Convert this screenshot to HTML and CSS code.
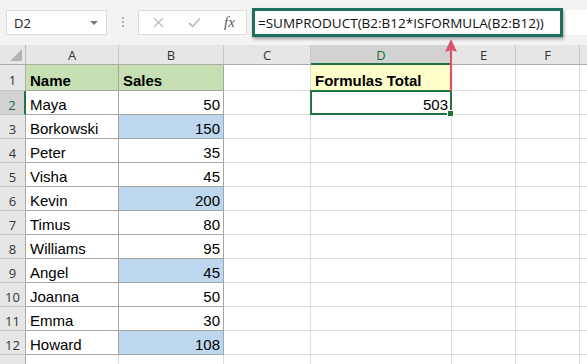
FILE: index.html
```html
<!DOCTYPE html>
<html lang="en">

<head>
    <meta charset="UTF-8">
    <title>SUMPRODUCT ISFORMULA</title>
    <link rel="stylesheet" href="styles.css">
</head>

<body>
    <div class="app">
        <div class="toolbar">
            <div class="name-box">
                <span>D2</span>
                <span class="drop"></span>
            </div>
            <div class="grip">
                <i></i><i></i><i></i>
            </div>
            <div class="fx-buttons">
                <svg class="btn-x" width="11" height="11" viewBox="0 0 11 11">
                    <path d="M1 1 L10 10 M10 1 L1 10" stroke="#bdbdbd" stroke-width="1.3" fill="none"/>
                </svg>
                <svg class="btn-ok" width="13" height="11" viewBox="0 0 13 11">
                    <path d="M1 6 L4.5 9.5 L12 1.5" stroke="#bdbdbd" stroke-width="1.8" fill="none"/>
                </svg>
                <span class="btn-fx">fx</span>
            </div>
            <div class="formula">
                <div class="formula-text">=SUMPRODUCT(B2:B12*ISFORMULA(B2:B12))</div>
            </div>
        </div>

        <div class="sheet">
            <!-- column headers -->
            <div class="corner"><span class="tri"></span></div>
            <div class="col-head">A</div>
            <div class="col-head">B</div>
            <div class="col-head">C</div>
            <div class="col-head selected">D</div>
            <div class="col-head">E</div>
            <div class="col-head">F</div>
            <div class="col-head last"></div>

            <div class="row-head">1</div>
            <div class="cell tbl head">Name</div>
            <div class="cell tbl head">Sales</div>
            <div class="cell"></div>
            <div class="cell label">Formulas Total</div>
            <div class="cell"></div>
            <div class="cell"></div>
            <div class="cell"></div>

            <div class="row-head selected">2</div>
            <div class="cell tbl">Maya</div>
            <div class="cell tbl num">50</div>
            <div class="cell"></div>
            <div class="cell num active">503<span class="handle"></span></div>
            <div class="cell"></div>
            <div class="cell"></div>
            <div class="cell"></div>

            <div class="row-head">3</div>
            <div class="cell tbl">Borkowski</div>
            <div class="cell tbl num blue">150</div>
            <div class="cell"></div>
            <div class="cell"></div>
            <div class="cell"></div>
            <div class="cell"></div>
            <div class="cell"></div>

            <div class="row-head">4</div>
            <div class="cell tbl">Peter</div>
            <div class="cell tbl num">35</div>
            <div class="cell"></div>
            <div class="cell"></div>
            <div class="cell"></div>
            <div class="cell"></div>
            <div class="cell"></div>

            <div class="row-head">5</div>
            <div class="cell tbl">Visha</div>
            <div class="cell tbl num">45</div>
            <div class="cell"></div>
            <div class="cell"></div>
            <div class="cell"></div>
            <div class="cell"></div>
            <div class="cell"></div>

            <div class="row-head">6</div>
            <div class="cell tbl">Kevin</div>
            <div class="cell tbl num blue">200</div>
            <div class="cell"></div>
            <div class="cell"></div>
            <div class="cell"></div>
            <div class="cell"></div>
            <div class="cell"></div>

            <div class="row-head">7</div>
            <div class="cell tbl">Timus</div>
            <div class="cell tbl num">80</div>
            <div class="cell"></div>
            <div class="cell"></div>
            <div class="cell"></div>
            <div class="cell"></div>
            <div class="cell"></div>

            <div class="row-head">8</div>
            <div class="cell tbl">Williams</div>
            <div class="cell tbl num">95</div>
            <div class="cell"></div>
            <div class="cell"></div>
            <div class="cell"></div>
            <div class="cell"></div>
            <div class="cell"></div>

            <div class="row-head">9</div>
            <div class="cell tbl">Angel</div>
            <div class="cell tbl num blue">45</div>
            <div class="cell"></div>
            <div class="cell"></div>
            <div class="cell"></div>
            <div class="cell"></div>
            <div class="cell"></div>

            <div class="row-head">10</div>
            <div class="cell tbl">Joanna</div>
            <div class="cell tbl num">50</div>
            <div class="cell"></div>
            <div class="cell"></div>
            <div class="cell"></div>
            <div class="cell"></div>
            <div class="cell"></div>

            <div class="row-head">11</div>
            <div class="cell tbl">Emma</div>
            <div class="cell tbl num">30</div>
            <div class="cell"></div>
            <div class="cell"></div>
            <div class="cell"></div>
            <div class="cell"></div>
            <div class="cell"></div>

            <div class="row-head">12</div>
            <div class="cell tbl">Howard</div>
            <div class="cell tbl num blue">108</div>
            <div class="cell"></div>
            <div class="cell"></div>
            <div class="cell"></div>
            <div class="cell"></div>
            <div class="cell"></div>

            <div class="row-head">13</div>
            <div class="cell"></div>
            <div class="cell"></div>
            <div class="cell"></div>
            <div class="cell"></div>
            <div class="cell"></div>
            <div class="cell"></div>
            <div class="cell"></div>
        </div>

        <!-- annotation arrow pointing at the formula bar -->
        <svg class="arrow" width="14" height="52" viewBox="0 0 14 52">
            <line x1="7" y1="8" x2="7" y2="52" stroke="#d9536b" stroke-width="2.2"/>
            <polygon points="7,0 13,13 7,11 1,13" fill="#d9536b"/>
        </svg>
    </div>
</body>

</html>
```

FILE: styles.css
```css
body {
    margin: 0;
    padding: 0;
    background-color: #ffffff;
    font-family: 'Liberation Sans', Arial, sans-serif;
}

.app {
    position: relative;
    width: 587px;
    height: 364px;
    overflow: hidden;
}

.toolbar {
    display: flex;
    align-items: flex-start;
    height: 45px;
    box-sizing: border-box;
    padding-top: 10px;
    background-color: #f3f3f3;
}

.name-box {
    display: flex;
    align-items: center;
    justify-content: space-between;
    width: 101px;
    height: 25px;
    box-sizing: border-box;
    margin-left: 6px;
    padding: 0 8px 0 7px;
    background-color: #ffffff;
    border: 1px solid #dcdcdc;
    font-family: 'Open Sans', sans-serif;
    font-size: 13px;
    color: #222;
}

.name-box .drop {
    width: 0;
    height: 0;
    border-left: 4px solid transparent;
    border-right: 4px solid transparent;
    border-top: 4px solid #7a7a7a;
}

.grip {
    display: flex;
    flex-direction: column;
    gap: 2px;
    width: 31px;
    align-items: center;
    padding-top: 7px;
}

.grip i {
    width: 2px;
    height: 2px;
    background-color: #b2b2b2;
}

.fx-buttons {
    display: flex;
    align-items: center;
    width: 109px;
    height: 25px;
    box-sizing: border-box;
    background-color: #ffffff;
    border: 1px solid #dcdcdc;
}

.btn-x {
    margin-left: 14px;
}

.btn-ok {
    margin-left: 24px;
}

.btn-fx {
    margin-left: 23px;
    font-family: 'Liberation Serif', serif;
    font-style: italic;
    font-size: 15px;
    color: #5a5a5a;
}

.formula {
    position: relative;
    flex: 1;
    height: 25px;
    margin-left: 6px;
    background-color: #ffffff;
}

.formula-text {
    position: absolute;
    left: -1px;
    top: -2px;
    width: 311px;
    height: 29px;
    box-sizing: border-box;
    border: 3px solid #1f6f5e;
    box-shadow: 1px 2px 3px rgba(0, 0, 0, 0.35);
    padding: 3px 0 0 3px;
    font-family: 'Open Sans', sans-serif;
    font-size: 13.5px;
    color: #111;
    white-space: nowrap;
}

.sheet {
    display: grid;
    grid-template-columns: 26px 93px 105px 87px 141px 64px 64px 1fr;
    grid-template-rows: 20px 26px repeat(11, 24px) 24px;
}

.corner,
.col-head,
.row-head {
    box-sizing: border-box;
    background-color: #e6e6e6;
    color: #333;
    font-family: 'Open Sans', sans-serif;
    font-size: 13px;
    display: flex;
    align-items: center;
    justify-content: center;
}

.corner {
    position: relative;
    border-right: 1px solid #bdbdbd;
    border-bottom: 1px solid #ababab;
}

.corner .tri {
    position: absolute;
    right: 3px;
    bottom: 3px;
    width: 0;
    height: 0;
    border-left: 12px solid transparent;
    border-bottom: 12px solid #b4b4b4;
}

.col-head {
    border-right: 1px solid #c6c6c6;
    border-bottom: 1px solid #ababab;
    padding-top: 1px;
}

.col-head.last {
    border-right: none;
}

.col-head.selected {
    background-color: #d2d2d2;
    color: #1e6b3f;
    border-bottom: 2px solid #217346;
}

.row-head {
    border-right: 1px solid #ababab;
    border-bottom: 1px solid #c6c6c6;
    padding-top: 4px;
}

.row-head.selected {
    background-color: #d2d2d2;
    color: #1e6b3f;
    border-right: 2px solid #217346;
}

.cell {
    box-sizing: border-box;
    border-right: 1px solid #dadada;
    border-bottom: 1px solid #dadada;
    display: flex;
    align-items: center;
    padding: 4px 3px 0 4px;
    font-size: 15px;
    color: #000;
    white-space: nowrap;
}

.cell.tbl {
    border-right-color: #a6a6a6;
    border-bottom-color: #a6a6a6;
}

.cell.head {
    background-color: #c6e0b4;
    font-weight: bold;
    padding-top: 6px;
}

.cell.blue {
    background-color: #bdd7ee;
}

.cell.num {
    justify-content: flex-end;
}

.cell.label {
    background-color: #ffffcc;
    font-weight: bold;
    padding-top: 6px;
}

.cell.active {
    position: relative;
    border: 2px solid #217346;
    margin: -1px 0 0 -1px;
    padding-right: 2px;
}

.handle {
    position: absolute;
    right: -4px;
    bottom: -4px;
    width: 5px;
    height: 5px;
    background-color: #217346;
    border: 1px solid #ffffff;
}

.arrow {
    position: absolute;
    left: 444px;
    top: 39px;
}
```
